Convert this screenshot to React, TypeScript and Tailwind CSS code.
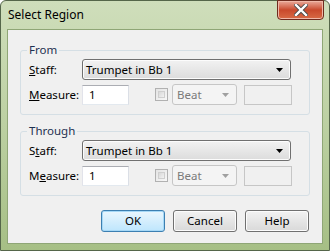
import React from "react";

const font = { fontFamily: '"Noto Sans", "Open Sans", sans-serif' };

function Combo({ value }: { value: string }) {
  return (
    <div className="flex h-[21px] w-[209px] items-center rounded-[3px] border border-[#707070] bg-gradient-to-b from-[#f2f2f2] to-[#dcdcdc] pl-[3px] pr-[7px] shadow-[inset_0_0_0_1px_#fcfcfc]">
      <span className="flex-1 text-[11.5px] text-black">{value}</span>
      <svg width="7" height="4" viewBox="0 0 7 4">
        <path d="M0 0H7L3.5 4Z" fill="#000" />
      </svg>
    </div>
  );
}

function Row({ staff, measure }: { staff: React.ReactNode; measure: React.ReactNode }) {
  return (
    <div className="flex flex-col gap-[4px] pl-[8px]">
      <div className="flex items-center">
        <span className="w-[53px] text-[11.5px]">{staff}</span>
        <Combo value="Trumpet in Bb 1" />
      </div>
      <div className="flex items-center">
        <span className="w-[53px] text-[11.5px]">{measure}</span>
        <div className="flex h-[20px] w-[47px] items-center border border-[#abadb3] border-r-[#dbdfe6] border-b-[#e3e9ef] border-l-[#e2e3ea] bg-white pl-[6px] text-[11.5px]">
          1
        </div>
        <div className="ml-[26px] h-[13px] w-[13px] border border-[#b1b1b1] bg-gradient-to-br from-[#e4e4e4] to-[#f7f7f7] p-[2px]">
          <div className="h-full w-full border border-[#cfcfcf] bg-gradient-to-br from-[#d8d8d8] to-[#f2f2f2]" />
        </div>
        <div className="ml-[4px] flex h-[21px] w-[65px] items-center rounded-[3px] border border-[#c6c6c6] bg-[#f4f4f4] pl-[4px] pr-[7px] text-[11.5px] text-[#7a7a7a]">
          <span className="flex-1">Beat</span>
          <svg width="7" height="4" viewBox="0 0 7 4">
            <path d="M0 0H7L3.5 4Z" fill="#a0a0a0" />
          </svg>
        </div>
        <div className="ml-[7px] h-[20px] w-[48px] border border-[#c6c6c6] bg-[#f0f0f0]" />
      </div>
    </div>
  );
}

function Group({ title, children }: { title: string; children: React.ReactNode }) {
  return (
    <div className="relative ml-[12px] w-[290px] rounded-[3px] border border-[#d5dfe5] pb-[9px] pt-[8px]">
      <span className="absolute left-[6px] top-[-9px] bg-[#f0f0f0] px-[2px] text-[11.5px] leading-[16px] text-[#1e3050]">
        {title}
      </span>
      {children}
    </div>
  );
}

function Btn({ label, def }: { label: string; def?: boolean }) {
  return (
    <button
      className={
        def
          ? "h-[22px] w-[64px] rounded-[3px] border border-[#3c7fb1] bg-gradient-to-b from-[#eaf6fd] to-[#bee6fd] text-[11.5px] text-black shadow-[inset_0_0_0_1px_#a6d8f6]"
          : "h-[22px] w-[64px] rounded-[3px] border border-[#707070] bg-gradient-to-b from-[#f2f2f2] to-[#d9d9d9] text-[11.5px] text-black shadow-[inset_0_0_0_1px_#fcfcfc]"
      }
    >
      {label}
    </button>
  );
}

export default function App() {
  return (
    <div style={font} className="h-[251px] w-[330px] bg-white">
      <div className="flex h-full w-full flex-col rounded-t-[6px] border border-[#55664a] bg-gradient-to-b from-[#cfdebb] via-[#bcd0a2] to-[#a6bf85]">
        <div className="flex h-[28px] items-start">
          <span className="pl-[7px] pt-[5px] text-[12px] text-black">Select Region</span>
          <div className="ml-auto mr-[5px] mt-[-1px] flex h-[20px] w-[47px] items-center justify-center rounded-b-[4px] border border-[#6e2b1e] bg-gradient-to-b from-[#e9a99a] via-[#c9492c] to-[#d86a45] shadow-[inset_0_0_0_1px_#f0b8a8]">
            <svg width="14" height="12" viewBox="0 0 14 12">
              <path d="M2 1L12 11M12 1L2 11" stroke="#4a4a4a" strokeWidth="4.2" strokeLinecap="square" />
              <path d="M2 1L12 11M12 1L2 11" stroke="#fff" strokeWidth="2.4" strokeLinecap="square" />
            </svg>
          </div>
        </div>
        <div className="mx-[6px] flex h-[215px] flex-col border border-[#8fa676] bg-[#f0f0f0] pt-[20px]">
          <Group title="From">
            <Row
              staff={<><u>S</u>taff:</>}
              measure={<><u>M</u>easure:</>}
            />
          </Group>
          <div className="mt-[16px]">
            <Group title="Through">
              <Row
                staff={<>S<u>t</u>aff:</>}
                measure={<>M<u>e</u>asure:</>}
              />
            </Group>
          </div>
          <div className="mt-[14px] flex items-center gap-[8px] pl-[93px]">
            <Btn label="OK" def />
            <Btn label="Cancel" />
            <Btn label="Help" />
          </div>
        </div>
      </div>
    </div>
  );
}
